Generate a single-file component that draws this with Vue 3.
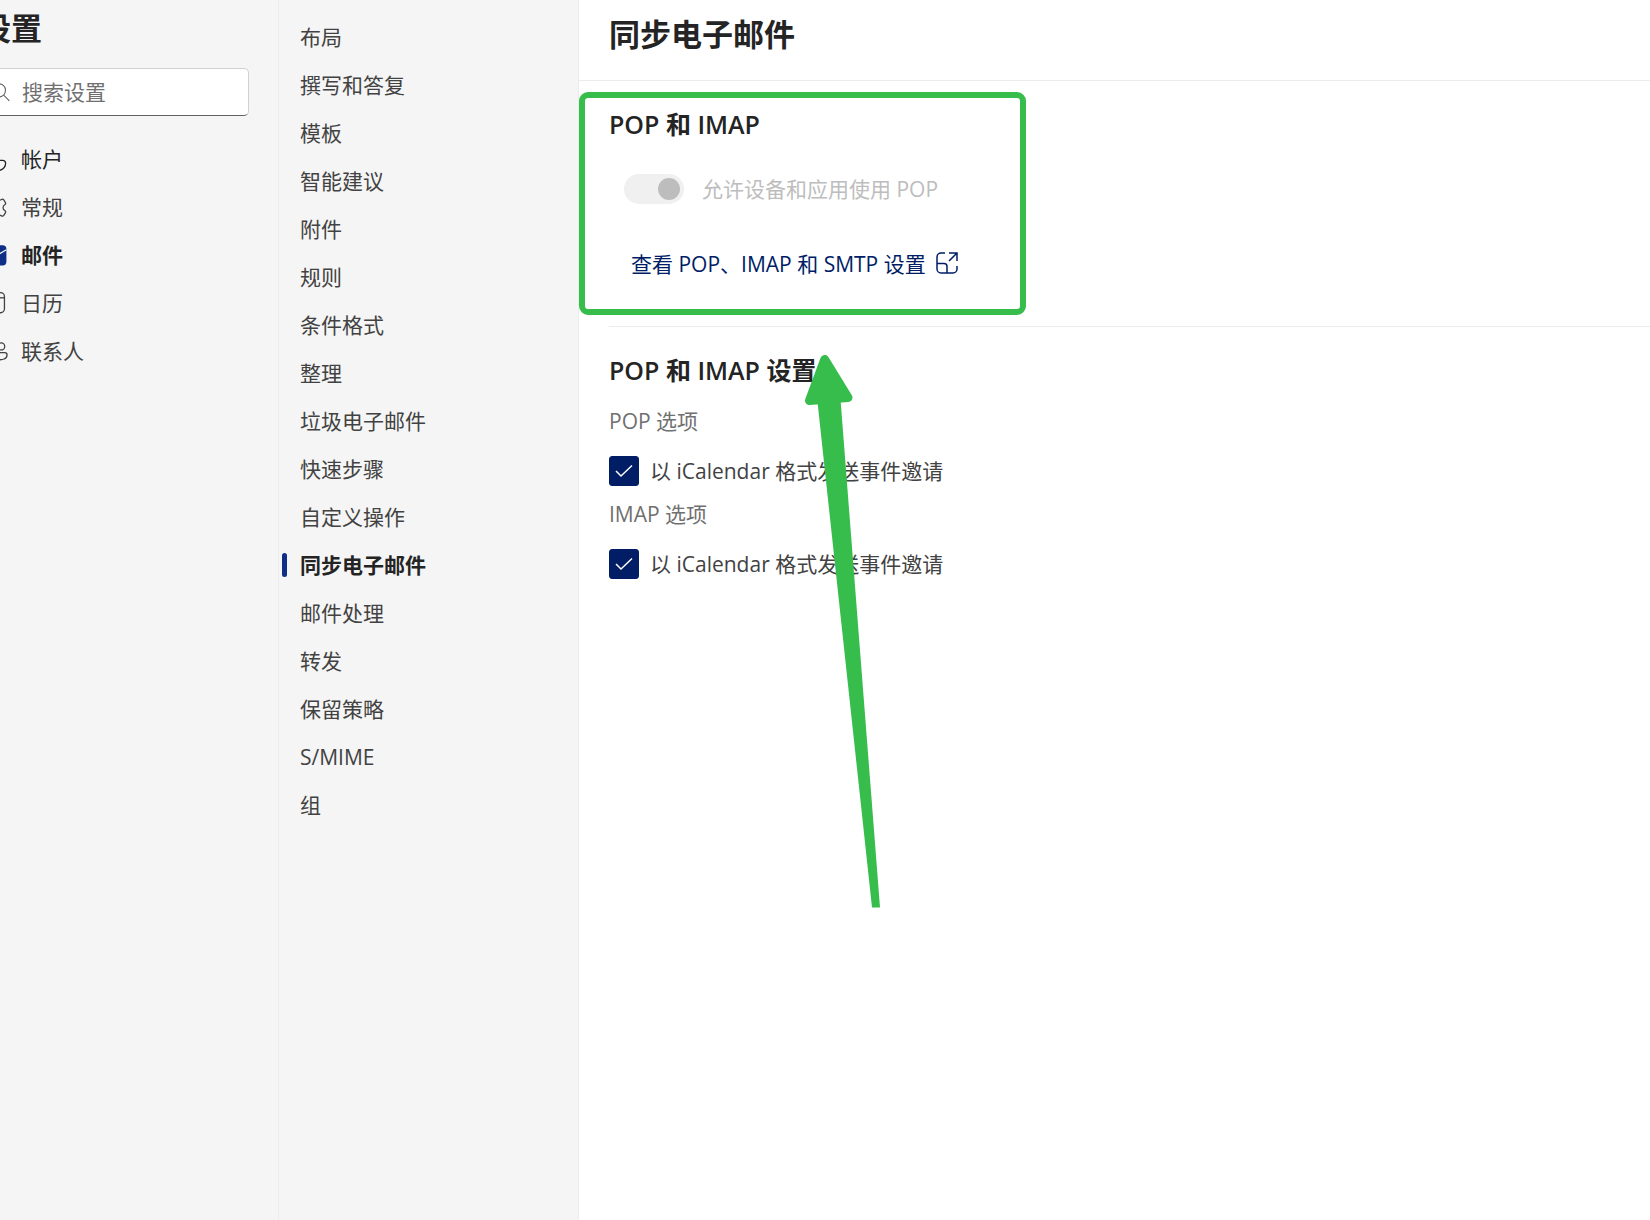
<script setup>
/**
 * 设置页面：同步电子邮件
 */
import { ref } from 'vue'

const keyword = ref('')
const allowPop = ref(true)

const categories = [
  { id: 'account', label: '帐户', strong: true },
  { id: 'general', label: '常规' },
  { id: 'mail', label: '邮件', active: true },
  { id: 'calendar', label: '日历' },
  { id: 'people', label: '联系人' }
]

const pages = [
  '布局',
  '撰写和答复',
  '模板',
  '智能建议',
  '附件',
  '规则',
  '条件格式',
  '整理',
  '垃圾电子邮件',
  '快速步骤',
  '自定义操作',
  '同步电子邮件',
  '邮件处理',
  '转发',
  '保留策略',
  'S/MIME',
  '组'
]
const currentPage = '同步电子邮件'

const options = ref([
  { id: 'pop', title: 'POP 选项', checked: true },
  { id: 'imap', title: 'IMAP 选项', checked: true }
])
</script>

<template>
  <div class="settings">
    <aside class="sidebar">
      <h1 class="sidebar-title">设置</h1>
      <label class="search">
        <svg class="search-icon" viewBox="0 0 20 20" aria-hidden="true">
          <circle cx="9" cy="8.5" r="6" />
          <path d="M13.3 12.8 18.5 18" />
        </svg>
        <input v-model="keyword" type="text" placeholder="搜索设置" aria-label="搜索设置" />
      </label>
      <nav class="categories">
        <a
          v-for="item in categories"
          :key="item.id"
          href="#"
          :class="['category', { active: item.active, strong: item.strong }]"
        >
          <svg class="category-icon" viewBox="0 0 20 20" aria-hidden="true">
            <g v-if="item.id === 'account'">
              <circle cx="8" cy="5.5" r="3.5" />
              <path d="M10 11H4.5A1.5 1.5 0 0 0 3 12.5c0 2.5 2.5 5 6 5M13 11h2c1.500 0 2.400.9 2.400 2.200 0 2.600-1.700 4.500-4.400 5.500" />
            </g>
            <g v-else-if="item.id === 'general'">
              <circle cx="9" cy="10.500" r="2.500" />
              <path d="M11.500 4.500c.8.400 1.600.3 2.300-.1.900-.5 1.700-.6 2.200.1l1.300 2.200c.3.700.1 1.200-.6 1.600-1.700 1.100-1.700 3.300 0 4.400.7.400.9.900.6 1.600L16 16.500c-.5.700-1.300.6-2.200.1-.7-.4-1.500-.5-2.300-.1-.9.400-.5 2-1.500 2H8c-1 0-.6-1.600-1.500-2-.8-.4-1.600-.3-2.300.1-.9.500-1.700.6-2.200-.1L.7 14.300c-.3-.7-.1-1.200.6-1.600 1.700-1.100 1.700-3.300 0-4.400-.7-.4-.9-.9-.6-1.600L2 4.500c.5-.7 1.300-.6 2.200-.1.700.4 1.500.5 2.300.1.900-.4.500-2 1.500-2h2c1 0 .6 1.600 1.500 2z" />
            </g>
            <g v-else-if="item.id === 'mail'">
              <rect class="fill" x="2" y="2.500" width="16" height="15.500" rx="3" />
              <path class="flap" d="M2 6l8 4.500L18 6" />
            </g>
            <g v-else-if="item.id === 'calendar'">
              <rect x="1.500" y="2" width="15" height="15.500" rx="3" />
              <path d="M1.500 6h15" />
            </g>
            <g v-else>
              <circle cx="6.500" cy="6.500" r="3" />
              <circle cx="14" cy="6.500" r="2.700" />
              <path d="M11 16.500c4 .8 7.500-.5 7.500-3.500 0-1-.7-1.700-1.700-1.700H12M2 11.500h8v2c0 5-8 5-8 0z" />
            </g>
          </svg>
          <span>{{ item.label }}</span>
        </a>
      </nav>
    </aside>

    <nav class="pages">
      <a
        v-for="page in pages"
        :key="page"
        href="#"
        :class="['page', { active: page === currentPage }]"
      >{{ page }}</a>
    </nav>

    <main class="content">
      <header class="content-header">
        <h2>同步电子邮件</h2>
      </header>

      <section class="section access">
        <h3>POP 和 IMAP</h3>
        <label class="switch">
          <input v-model="allowPop" type="checkbox" role="switch" disabled />
          <span>允许设备和应用使用 POP</span>
        </label>
        <a class="more" href="#">
          <span>查看 POP、IMAP 和 SMTP 设置</span>
          <svg viewBox="0 0 24 24" aria-hidden="true">
            <path d="M10 1H6a4 4 0 0 0-4 4v12a4 4 0 0 0 4 4h12a4 4 0 0 0 4-4v-3M14 1h8v8M22 1l-8 8M2 11.500h7a3 3 0 0 1 3 3V21" />
          </svg>
        </a>
        <div class="highlight"></div>
      </section>

      <section class="section">
        <h3>POP 和 IMAP 设置</h3>
        <div v-for="option in options" :key="option.id" class="option">
          <p>{{ option.title }}</p>
          <label class="check">
            <input v-model="option.checked" type="checkbox" />
            <svg viewBox="0 0 30 30" aria-hidden="true">
              <path d="M7 15l5 5L23 9.500" />
            </svg>
            <span>以 iCalendar 格式发送事件邀请</span>
          </label>
        </div>
      </section>

      <svg class="arrow" viewBox="0 0 60 560" aria-hidden="true">
        <path class="arrow-head" d="M23.700 7.500 8.500 48.500l38.500-3z" />
        <path d="M16.500 50h23.200L79 555.500h-8z" />
      </svg>
    </main>
  </div>
</template>

<style>
body {
  margin: 0;
}
</style>

<style scoped>
.settings {
  display: flex;
  min-height: 100vh;
  overflow: hidden;
  background: #f5f5f5;
  color: #424242;
  font-family: 'Open Sans', 'Noto Sans CJK SC', sans-serif;
  font-size: 21px;
  line-height: 30px;
}

h1,
h2,
h3,
p {
  margin: 0;
}

a {
  color: inherit;
  text-decoration: none;
}

/* 左侧栏，部分移出窗口 */
.sidebar {
  box-sizing: border-box;
  flex: none;
  width: 299px;
  margin-left: -20px;
  padding: 8px 29px 0 0;
  border-right: 1px solid #ececec;
}

.sidebar-title {
  color: #242424;
  font-size: 31px;
  line-height: 40px;
}

.search {
  box-sizing: border-box;
  display: flex;
  align-items: center;
  gap: 11px;
  height: 48px;
  margin-top: 20px;
  padding-left: 8px;
  background: #fff;
  border: 1px solid #d1d1d1;
  border-bottom-color: #616161;
  border-radius: 5px;
}

.search-icon {
  width: 22px;
  height: 22px;
  fill: none;
  stroke: #616161;
  stroke-width: 1;
}

.search input {
  flex: 1;
  min-width: 0;
  padding: 0;
  border: 0;
  outline: 0;
  background: none;
  color: #424242;
  font: inherit;
}

.search input::placeholder {
  color: #707070;
  opacity: 1;
}

.categories {
  margin-top: 19px;
}

.category {
  display: flex;
  align-items: center;
  gap: 12px;
  height: 48px;
  padding-left: 3px;
}

.category.strong {
  color: #242424;
}

.category.active {
  color: #242424;
  font-weight: 700;
}

.category-icon {
  width: 26px;
  height: 26px;
  fill: none;
  stroke: currentColor;
  stroke-width: 1;
}

.category-icon .fill {
  fill: #0f2f86;
  stroke: none;
}

.category-icon .flap {
  stroke: #f5f5f5;
}

/* 二级菜单 */
.pages {
  box-sizing: border-box;
  flex: none;
  width: 300px;
  padding-top: 13px;
  border-right: 1px solid #ececec;
}

.page {
  position: relative;
  display: flex;
  align-items: center;
  height: 48px;
  padding-left: 21px;
}

.page.active {
  color: #242424;
  font-weight: 700;
}

.page.active::before {
  content: '';
  position: absolute;
  top: 12px;
  left: 3px;
  width: 5px;
  height: 24px;
  border-radius: 3px;
  background: #0f2f86;
}

/* 内容区 */
.content {
  position: relative;
  flex: 1;
  min-width: 0;
  background: #fff;
}

.content-header {
  padding: 14px 30px 26px;
  border-bottom: 1px solid #ececec;
}

.content-header h2 {
  color: #242424;
  font-size: 31px;
  line-height: 40px;
}

.section {
  position: relative;
  margin-left: 30px;
  padding-top: 27px;
}

.section h3 {
  color: #242424;
  font-size: 25px;
  font-weight: 600;
  line-height: 32px;
}

.access {
  padding-bottom: 47px;
  border-bottom: 1px solid #ececec;
}

.switch {
  display: flex;
  align-items: center;
  gap: 18px;
  width: fit-content;
  margin: 34px 0 0 15px;
  color: #bdbdbd;
}

.switch input {
  appearance: none;
  display: flex;
  justify-content: flex-end;
  align-items: center;
  box-sizing: border-box;
  width: 60px;
  height: 30px;
  margin: 0;
  padding: 0 4px;
  border-radius: 15px;
  background: #f0f0f0;
}

.switch input::before {
  content: '';
  width: 22px;
  height: 22px;
  border-radius: 50%;
  background: #bdbdbd;
}

.more {
  display: flex;
  align-items: center;
  gap: 9px;
  width: fit-content;
  margin: 45px 0 0 22px;
  color: #001d66;
}

.more svg {
  width: 24px;
  height: 24px;
  overflow: visible;
  fill: none;
  stroke: currentColor;
  stroke-width: 1.5;
}

.option {
  margin-top: 13px;
}

h3 + .option {
  margin-top: 20px;
}

.option p {
  color: #707070;
}

.check {
  display: grid;
  grid-template-columns: 30px auto;
  align-items: center;
  gap: 11px;
  width: fit-content;
  margin-top: 20px;
}

.check input,
.check svg {
  grid-area: 1 / 1;
  width: 30px;
  height: 30px;
  margin: 0;
}

.check input {
  appearance: none;
  border: 1px solid #616161;
  border-radius: 3px;
}

.check input:checked {
  border-color: #001d66;
  background: #001d66;
}

.check svg {
  z-index: 1;
  visibility: hidden;
  fill: none;
  stroke: #fff;
  stroke-width: 1.5;
  pointer-events: none;
}

.check input:checked + svg {
  visibility: visible;
}

/* 绿色标注 */
.highlight {
  position: absolute;
  top: 11px;
  left: -30px;
  box-sizing: border-box;
  width: 447px;
  height: 223px;
  border: 6px solid #37bd4c;
  border-radius: 9px;
  pointer-events: none;
}

.arrow {
  position: absolute;
  top: 352px;
  left: 222px;
  width: 60px;
  height: 560px;
  overflow: visible;
  fill: #37bd4c;
  pointer-events: none;
}

.arrow-head {
  stroke: #37bd4c;
  stroke-width: 9;
  stroke-linejoin: round;
}
</style>
